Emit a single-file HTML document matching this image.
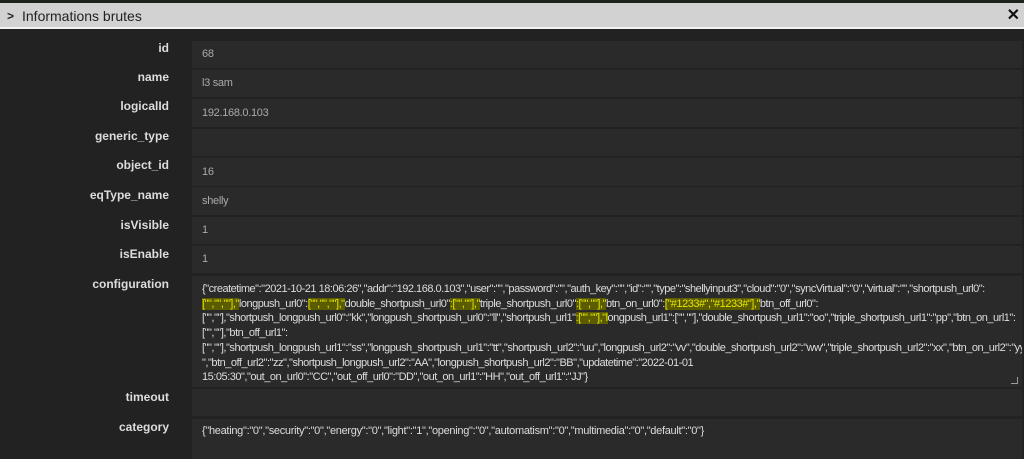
<!DOCTYPE html>
<html><head><meta charset="utf-8"><style>
*{margin:0;padding:0;box-sizing:border-box}
body{width:1024px;height:459px;overflow:hidden;background:#222;font-family:"Liberation Sans",sans-serif;position:relative}
.top{position:absolute;left:0;top:0;width:1024px;height:3px;background:#1b2419}
.hdr{position:absolute;left:0;top:3px;width:1024px;height:26px;background:#d2d2d2;border-bottom:2px solid #f2f2f2;color:#222;font-size:14px;line-height:26px}
.hdr .t{position:absolute;left:22px;top:0}
.hdr .c{position:absolute;left:7px;top:0;font-weight:bold;font-size:12px}
.hdr .x{position:absolute;right:4px;top:0;font-weight:bold;font-size:16px;color:#111}
.lab{position:absolute;right:855px;color:#ddd;font-weight:bold;font-size:12px}
.inp{position:absolute;left:192px;width:830px;background:#2a2a2a;color:#aaa;font-size:11px;padding-left:10px;letter-spacing:-0.3px}
.cfg{line-height:14.7px;padding-top:6px;white-space:pre;overflow:hidden;letter-spacing:-0.48px;color:#ddd}
.h{background:#5b5b00;color:#e6e600}
.rz{position:absolute;right:4px;bottom:3px;width:7px;height:7px;border-right:1px solid #999;border-bottom:1px solid #999}
</style></head><body>
<div class="top"></div>
<div class="hdr"><span class="c">&gt;</span><span class="t">Informations brutes</span><span class="x">✕</span></div>

<div class="lab" style="top:41px">id</div><div class="inp" style="top:41px;height:27px;line-height:27px">68</div>
<div class="lab" style="top:70px">name</div><div class="inp" style="top:70px;height:27px;line-height:27px">l3 sam</div>
<div class="lab" style="top:99px">logicalId</div><div class="inp" style="top:99px;height:28px;line-height:28px">192.168.0.103</div>
<div class="lab" style="top:129px">generic_type</div><div class="inp" style="top:129px;height:27px"></div>
<div class="lab" style="top:158px">object_id</div><div class="inp" style="top:158px;height:28px;line-height:28px">16</div>
<div class="lab" style="top:188px">eqType_name</div><div class="inp" style="top:187px;height:28px;line-height:28px">shelly</div>
<div class="lab" style="top:218px">isVisible</div><div class="inp" style="top:217px;height:27px;line-height:27px">1</div>
<div class="lab" style="top:247px">isEnable</div><div class="inp" style="top:246px;height:27px;line-height:27px">1</div>
<div class="lab" style="top:277px">configuration</div>
<div class="inp cfg" style="top:276px;height:111px">{"createtime":"2021-10-21 18:06:26","addr":"192.168.0.103","user":"","password":"","auth_key":"","id":"","type":"shellyinput3","cloud":"0","syncVirtual":"0","virtual":"","shortpush_url0":
<span class="h">["","",""],"</span>longpush_url0":<span class="h">["","",""],"</span>double_shortpush_url0"<span class="h">:["",""],"</span>triple_shortpush_url0"<span class="h">:["",""],"</span>btn_on_url0":<span class="h">["#1233#","#1233#"],"</span>btn_off_url0":
["",""],"shortpush_longpush_url0":"kk","longpush_shortpush_url0":"ll","shortpush_url1"<span class="h">:["",""],"l</span>ongpush_url1":["",""],"double_shortpush_url1":"oo","triple_shortpush_url1":"pp","btn_on_url1":
["",""],"btn_off_url1":
["",""],"shortpush_longpush_url1":"ss","longpush_shortpush_url1":"tt","shortpush_url2":"uu","longpush_url2":"vv","double_shortpush_url2":"ww","triple_shortpush_url2":"xx","btn_on_url2":"yy
","btn_off_url2":"zz","shortpush_longpush_url2":"AA","longpush_shortpush_url2":"BB","updatetime":"2022-01-01
15:05:30","out_on_url0":"CC","out_off_url0":"DD","out_on_url1":"HH","out_off_url1":"JJ"}<div class="rz"></div></div>
<div class="lab" style="top:390px">timeout</div><div class="inp" style="top:389px;height:27px"></div>
<div class="lab" style="top:420px">category</div><div class="inp" style="top:419px;height:40px;padding-top:6px;color:#ddd">{"heating":"0","security":"0","energy":"0","light":"1","opening":"0","automatism":"0","multimedia":"0","default":"0"}</div>
</body></html>
